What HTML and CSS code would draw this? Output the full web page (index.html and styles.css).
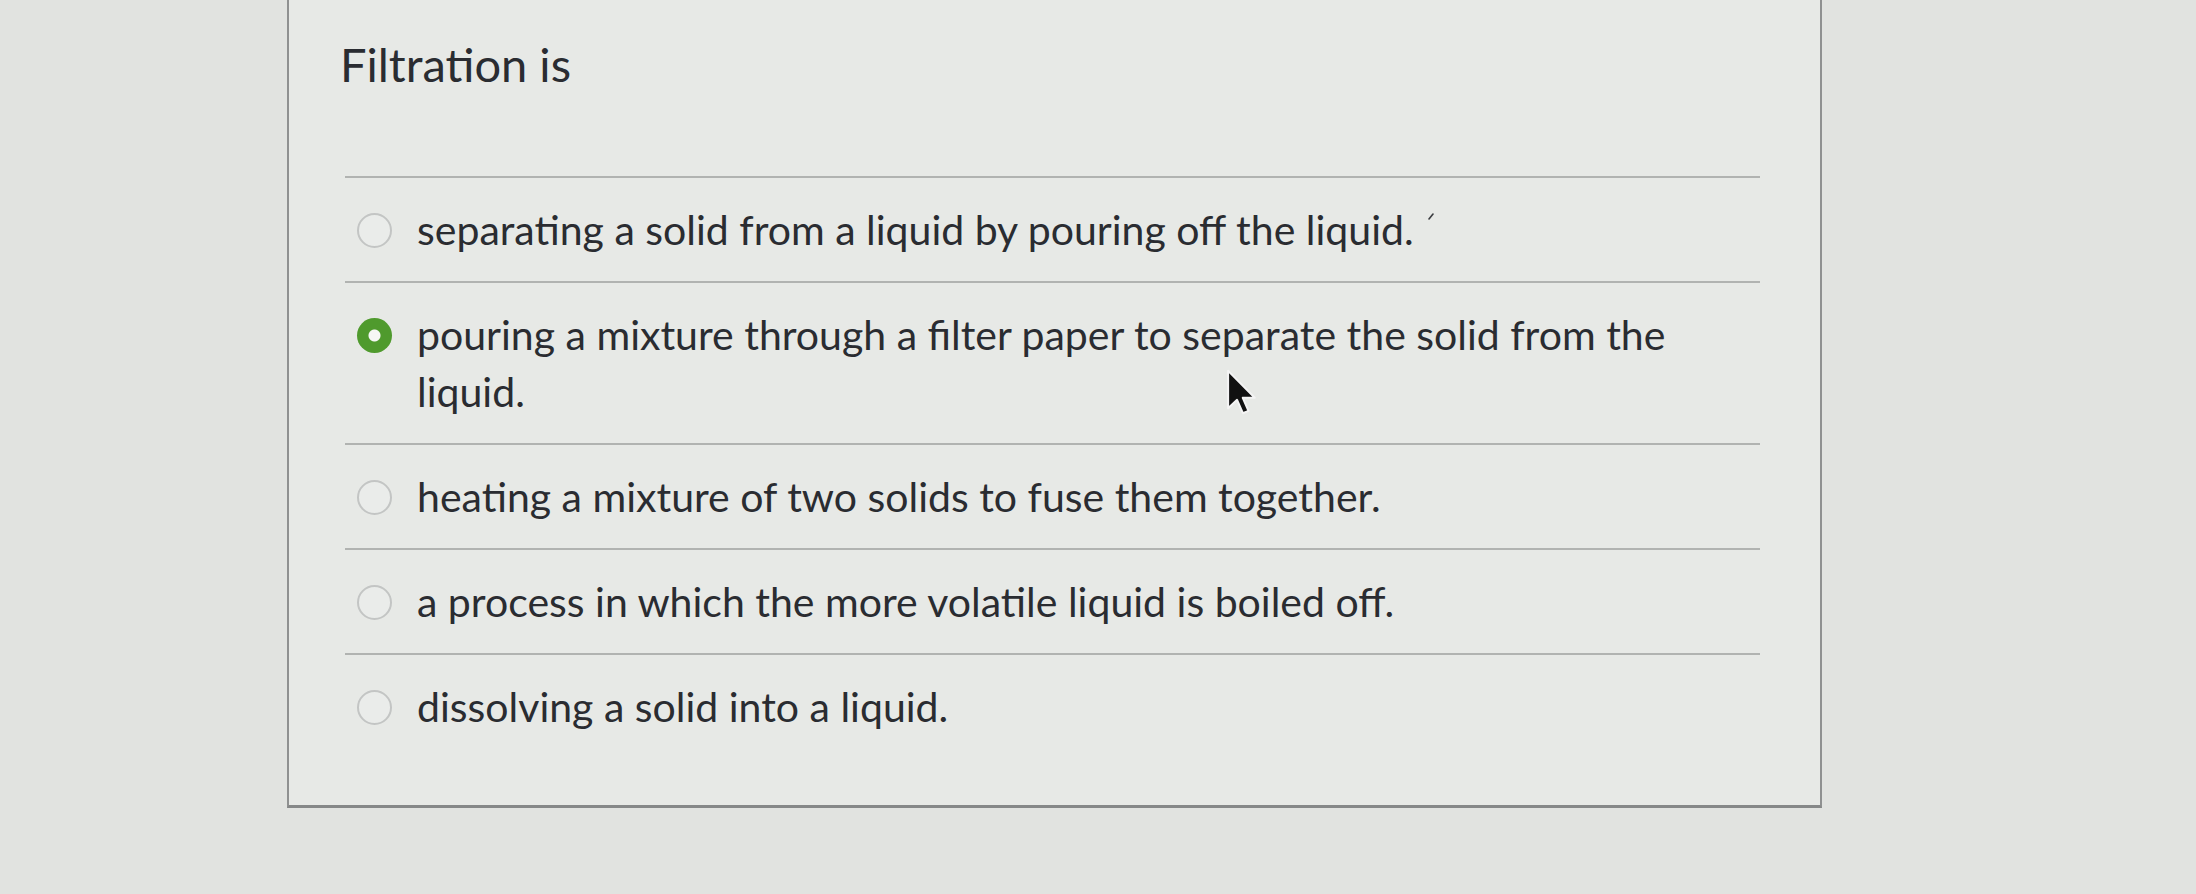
FILE: index.html
```html
<!DOCTYPE html>
<html lang="en">
<head>
<meta charset="utf-8">
<title>Filtration is</title>
<link rel="stylesheet" href="styles.css">
</head>
<body>
<div class="screen">
  <div class="panel">
    <h1 class="question">Filtration is</h1>
    <div class="answers">
      <div class="answer">
        <span class="radio"></span>
        <span class="text">separating a solid from a liquid by pouring off the liquid.</span>
      </div>
      <div class="answer">
        <span class="radio checked"></span>
        <span class="text">pouring a mixture through a filter paper to separate the solid from the liquid.</span>
      </div>
      <div class="answer">
        <span class="radio"></span>
        <span class="text">heating a mixture of two solids to fuse them together.</span>
      </div>
      <div class="answer">
        <span class="radio"></span>
        <span class="text">a process in which the more volatile liquid is boiled off.</span>
      </div>
      <div class="answer">
        <span class="radio"></span>
        <span class="text">dissolving a solid into a liquid.</span>
      </div>
    </div>
  </div>
  <svg class="tick" width="8" height="10" viewBox="0 0 8 10"><path d="M6 1 L2 6" stroke="#3a3c40" stroke-width="1.6" stroke-linecap="round" fill="none"/></svg>
  <svg class="cursor" width="32" height="48" viewBox="0 0 25 38">
    <path d="M1.5 1.5 L1.5 31 L8.6 24.4 L13.2 35 L17.6 33.1 L13.1 22.8 L22.6 22.8 Z" fill="#111" stroke="#f4f4f4" stroke-width="1.6" stroke-linejoin="round"/>
  </svg>
</div>
</body>
</html>
```
FILE: styles.css
```css
html, body {
  margin: 0;
  padding: 0;
}
body {
  background: #e1e3e0;
  font-family: Lato, "Noto Sans", "Liberation Sans", sans-serif;
  color: #2a2c31;
  width: 2196px;
  height: 894px;
  overflow: hidden;
}
.screen {
  position: relative;
  width: 2196px;
  height: 894px;
}
.panel {
  margin-left: 287px;
  width: 1535px;
  box-sizing: border-box;
  background: #e7e9e6;
  border-left: 2px solid #8f9191;
  border-right: 2px solid #8f9191;
  border-bottom: 3px solid #868888;
  padding: 36px 60px 47px 51px;
}
.question {
  margin: 0;
  font-size: 47px;
  line-height: 56px;
  font-weight: 400;
  color: #2a2c31;
}
.answers {
  margin-top: 84px;
  margin-left: 5px;
}
.answer {
  display: flex;
  align-items: flex-start;
  gap: 25px;
  border-top: 2px solid #b1b3b1;
  padding: 23px 0 23px 12px;
}
.radio {
  flex: none;
  width: 35px;
  height: 35px;
  box-sizing: border-box;
  border-radius: 50%;
  border: 2px solid #c3c5c4;
  background: #eaecea;
  margin-top: 12px;
}
.radio.checked {
  border: none;
  background: radial-gradient(circle, #f6f7f5 0 5.5px, #4f9a2d 6.5px);
}
.text {
  font-size: 41px;
  line-height: 57px;
  max-width: 1320px;
}
.cursor {
  position: absolute;
  left: 1226px;
  top: 369px;
}
.tick {
  position: absolute;
  left: 1427px;
  top: 213px;
}
```
